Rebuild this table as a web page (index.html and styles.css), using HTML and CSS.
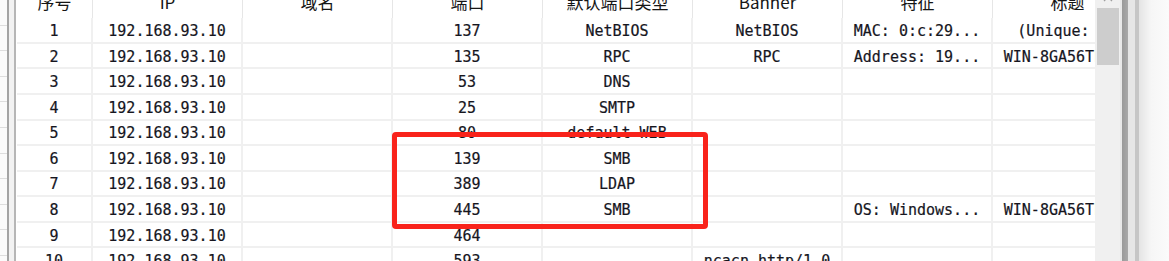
FILE: index.html
```html
<!DOCTYPE html>
<html>
<head>
<meta charset="utf-8">
<link rel="stylesheet" href="styles.css">
</head>
<body>
<div class="page">
  <div class="strip"></div>
  <div class="frame-a"></div>
  <div class="frame-gap"></div>
  <div class="frame-b"></div>
  <div class="table">
    <div class="row head">
      <div class="cell">序号</div><div class="cell">IP</div><div class="cell">域名</div><div class="cell">端口</div><div class="cell">默认端口类型</div><div class="cell">Banner</div><div class="cell">特征</div><div class="cell">标题</div>
    </div>
    <div class="row"><div class="cell">1</div><div class="cell">192.168.93.10</div><div class="cell"></div><div class="cell">137</div><div class="cell">NetBIOS</div><div class="cell">NetBIOS</div><div class="cell">MAC: 0:c:29...</div><div class="cell">(Unique: 1)</div></div>
    <div class="row"><div class="cell">2</div><div class="cell">192.168.93.10</div><div class="cell"></div><div class="cell">135</div><div class="cell">RPC</div><div class="cell">RPC</div><div class="cell">Address: 19...</div><div class="cell">WIN-8GA56TL...</div></div>
    <div class="row"><div class="cell">3</div><div class="cell">192.168.93.10</div><div class="cell"></div><div class="cell">53</div><div class="cell">DNS</div><div class="cell"></div><div class="cell"></div><div class="cell"></div></div>
    <div class="row"><div class="cell">4</div><div class="cell">192.168.93.10</div><div class="cell"></div><div class="cell">25</div><div class="cell">SMTP</div><div class="cell"></div><div class="cell"></div><div class="cell"></div></div>
    <div class="row"><div class="cell">5</div><div class="cell">192.168.93.10</div><div class="cell"></div><div class="cell">80</div><div class="cell">default WEB</div><div class="cell"></div><div class="cell"></div><div class="cell"></div></div>
    <div class="row"><div class="cell">6</div><div class="cell">192.168.93.10</div><div class="cell"></div><div class="cell">139</div><div class="cell">SMB</div><div class="cell"></div><div class="cell"></div><div class="cell"></div></div>
    <div class="row"><div class="cell">7</div><div class="cell">192.168.93.10</div><div class="cell"></div><div class="cell">389</div><div class="cell">LDAP</div><div class="cell"></div><div class="cell"></div><div class="cell"></div></div>
    <div class="row"><div class="cell">8</div><div class="cell">192.168.93.10</div><div class="cell"></div><div class="cell">445</div><div class="cell">SMB</div><div class="cell"></div><div class="cell">OS: Windows...</div><div class="cell">WIN-8GA56TL...</div></div>
    <div class="row"><div class="cell">9</div><div class="cell">192.168.93.10</div><div class="cell"></div><div class="cell">464</div><div class="cell"></div><div class="cell"></div><div class="cell"></div><div class="cell"></div></div>
    <div class="row"><div class="cell">10</div><div class="cell">192.168.93.10</div><div class="cell"></div><div class="cell">593</div><div class="cell"></div><div class="cell">ncacn_http/1.0</div><div class="cell"></div><div class="cell"></div></div>
  </div>
  <div class="scrollbar">
    <svg class="arrow" width="24" height="6" viewBox="0 0 24 6"><path d="M9 1 L13 -3 L17 1" fill="none" stroke="#a0a0a0" stroke-width="1.3"/></svg>
    <div class="thumb"></div>
  </div>
  <div class="edge-light"></div>
  <div class="edge-dark"></div>
  <div class="edge-pale"></div>
  <div class="edge-mid"></div>
  <div class="shadow"></div>
  <div class="highlight"></div>
</div>
</body>
</html>
```

FILE: styles.css
```css
html, body {
  margin: 0;
  padding: 0;
  background: #ffffff;
}
.page {
  position: relative;
  display: flex;
  width: 1169px;
  height: 261px;
  overflow: hidden;
}
.strip {
  width: 7px;
  flex: none;
  background: repeating-linear-gradient(to bottom, #fbfbfb 0, #fbfbfb 24.6px, #dedede 24.6px, #dedede 25.6px);
}
.frame-a {
  width: 2px;
  flex: none;
  background: #a4a4a4;
}
.frame-gap {
  width: 5px;
  flex: none;
  background: #f2f2f2;
}
.frame-b {
  width: 2px;
  flex: none;
  background: #b6b6b6;
}
.table {
  width: 1078px;
  flex: none;
  overflow: hidden;
  background: #ffffff;
  margin-left: 1px;
}
.row {
  display: grid;
  grid-template-columns: 76px repeat(7, 150px);
  grid-template-rows: 25.55px;
  height: 25.55px;
  font-family: "DejaVu Sans Mono", "Liberation Mono", monospace;
  font-size: 15px;
  color: #16161e;
  -webkit-text-stroke: 0.2px #16161e;
}
.row .cell {
  box-sizing: border-box;
  border-right: 2px solid #f0f0f0;
  border-bottom: 2px solid #f0f0f0;
  display: flex;
  align-items: center;
  justify-content: center;
  white-space: nowrap;
  overflow: hidden;
  padding-top: 2px;
}
.row.head {
  grid-template-rows: 18.4px;
  height: 18.4px;
  font-family: "Noto Sans CJK SC", "Noto Sans", sans-serif;
  font-size: 17px;
  color: #161616;
  -webkit-text-stroke: 0;
}
.row.head .cell {
  border-bottom: none;
  border-right: 1px solid #e6e6e6;
  align-items: flex-end;
  line-height: 17px;
  padding: 0 0 8px 0;
  overflow: visible;
}
.scrollbar {
  width: 25px;
  flex: none;
  background: #f0f0f0;
  display: flex;
  flex-direction: column;
  align-items: flex-start;
}
.arrow {
  display: block;
  flex: none;
}
.thumb {
  margin-top: 2px;
  margin-left: 2px;
  width: 22px;
  height: 57px;
  background: #cdcdcd;
}
.edge-light {
  width: 2px;
  flex: none;
  background: #e9e9e9;
}
.edge-dark {
  width: 6px;
  flex: none;
  background: linear-gradient(to right, #9a9a9a, #a9a9a9);
}
.edge-pale {
  width: 7px;
  flex: none;
  background: #e6e6e6;
}
.edge-mid {
  width: 4px;
  flex: none;
  background: #c6c6c6;
}
.shadow {
  flex: 1;
  background: linear-gradient(to right, #e4e4e4, #f6f6f6 40%, #fbfbfb);
}
.highlight {
  position: absolute;
  left: 392px;
  top: 132px;
  width: 316px;
  height: 97px;
  box-sizing: border-box;
  border: 5px solid #f9231b;
  border-radius: 4px;
}
```
